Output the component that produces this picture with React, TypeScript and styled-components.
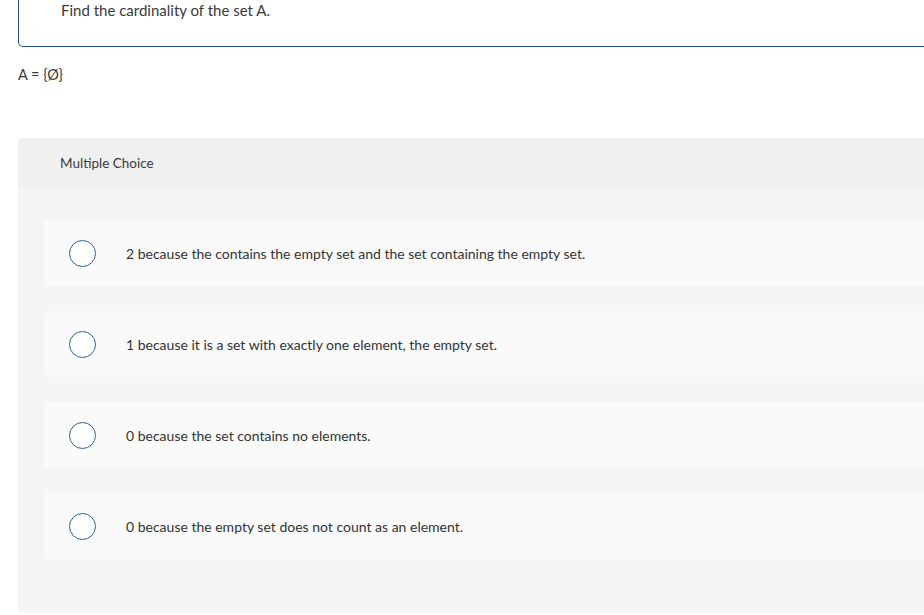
import React from 'react'
import styled, { createGlobalStyle } from 'styled-components'

const GlobalStyle = createGlobalStyle`
  html, body {
    margin: 0;
    padding: 0;
    background: #ffffff;
    overflow: hidden;
  }
  body {
    font-family: Lato, 'Liberation Sans', Arial, sans-serif;
    color: #333333;
  }
`

const Page = styled.div`
  padding-left: 18px;
  width: 940px;
`

const QuestionBox = styled.div`
  border: 1px solid #1d4f8c;
  border-top: none;
  border-bottom-left-radius: 5px;
  border-bottom-right-radius: 5px;
  padding: 0 0 26px 42px;
  font-size: 15px;
  line-height: 20px;
  color: #3a3a3a;
`

const SetLine = styled.div`
  margin-top: 19px;
  font-size: 14.5px;
  line-height: 18px;
  color: #3a3a3a;
`

const ChoicePanel = styled.section`
  margin-top: 54px;
  background: #f5f5f5;
  border-radius: 4px;
  overflow: hidden;
`

const PanelHeader = styled.div`
  height: 50px;
  display: flex;
  align-items: center;
  padding-left: 42px;
  background: #f0f0f0;
  font-size: 13.5px;
  color: #3a3a3a;
`

const OptionList = styled.div`
  display: flex;
  flex-direction: column;
  gap: 25px;
  padding: 32px 0 54px 26px;
`

const OptionCard = styled.label`
  height: 66px;
  display: flex;
  align-items: center;
  gap: 30px;
  padding-left: 25px;
  background: #fafafa;
  border-radius: 4px;
  font-size: 14px;
  color: #333333;
  cursor: pointer;
`

const Radio = styled.span`
  width: 25px;
  height: 25px;
  flex: none;
  border: 1.5px solid #2f5f92;
  border-radius: 50%;
  background: #ffffff;
`

const options = [
  '2 because the contains the empty set and the set containing the empty set.',
  '1 because it is a set with exactly one element, the empty set.',
  '0 because the set contains no elements.',
  '0 because the empty set does not count as an element.',
]

export default function App() {
  return (
    <>
      <GlobalStyle />
      <Page>
        <QuestionBox>Find the cardinality of the set A.</QuestionBox>
        <SetLine>A = {'{Ø}'}</SetLine>
        <ChoicePanel>
          <PanelHeader>Multiple Choice</PanelHeader>
          <OptionList>
            {options.map((text, i) => (
              <OptionCard key={i}>
                <Radio />
                <span>{text}</span>
              </OptionCard>
            ))}
          </OptionList>
        </ChoicePanel>
      </Page>
    </>
  )
}
